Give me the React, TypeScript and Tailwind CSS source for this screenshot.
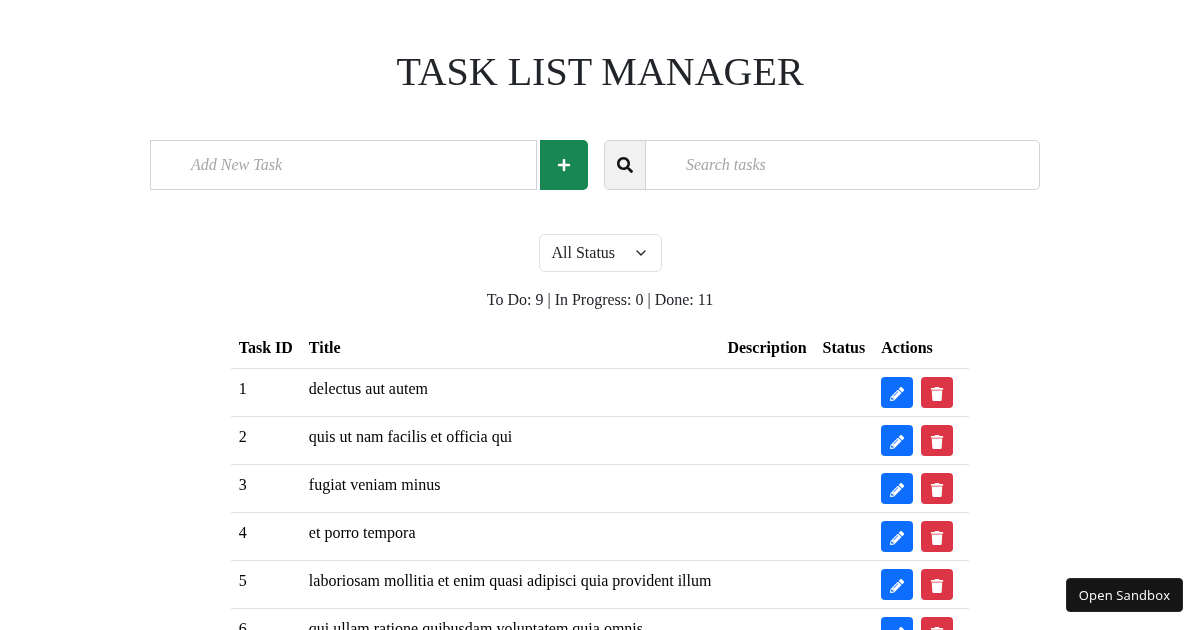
import { FaPlus, FaSearch, FaPencilAlt, FaTrash } from "react-icons/fa";
import { LuChevronDown } from "react-icons/lu";

const rows: [number, string][] = [
  [1, "delectus aut autem"],
  [2, "quis ut nam facilis et officia qui"],
  [3, "fugiat veniam minus"],
  [4, "et porro tempora"],
  [5, "laboriosam mollitia et enim quasi adipisci quia provident illum"],
  [6, "qui ullam ratione quibusdam voluptatem quia omnis"],
];

export default function App() {
  return (
    <div className="relative h-[630px] w-[1200px] overflow-hidden font-['Liberation_Serif',serif] text-[16px] leading-[24px] text-[#212529] will-change-transform">
      <h1 className="pt-[48px] text-center text-[40px] font-normal leading-[48px]">TASK LIST MANAGER</h1>
      <div className="mt-[44px] flex pl-[150px] pr-[160px]">
        <div className="flex h-[50px] w-[387px] items-center border border-[#ced4da] pl-[40px] italic text-[#a6a6a6]">Add New Task</div>
        <button className="ml-[3px] flex h-[50px] w-[48px] items-center justify-center rounded-r-[5px] bg-[#198754] text-white">
          <FaPlus className="h-[14px] w-[14px]" />
        </button>
        <div className="ml-[16px] flex h-[50px] flex-1 rounded-[5px] border border-[#ced4da]">
          <div className="flex w-[41px] items-center justify-center rounded-l-[4px] border-r border-[#ced4da] bg-[#f1f1f1] text-[#111]">
            <FaSearch className="h-[16px] w-[16px]" />
          </div>
          <div className="flex items-center pl-[40px] italic text-[#a6a6a6]">Search tasks</div>
        </div>
      </div>
      <div className="mt-[44px] flex justify-center">
        <div className="flex h-[38px] w-[123px] items-center justify-between rounded-[6px] border border-[#dee2e6] pl-[12px] pr-[12px]">
          <span>All Status</span>
          <LuChevronDown className="h-[16px] w-[16px]" />
        </div>
      </div>
      <p className="mt-[16px] text-center">To Do: 9 | In Progress: 0 | Done: 11</p>
      <div className="mt-[16px] flex justify-center">
        <table className="border-collapse text-black">
          <thead>
            <tr className="border-b border-[#dee2e6]">
              <th className="p-[8px] text-left font-bold">Task ID</th>
              <th className="p-[8px] text-left font-bold">Title</th>
              <th className="p-[8px] text-left font-bold">Description</th>
              <th className="p-[8px] text-left font-bold">Status</th>
              <th className="p-[8px] text-left font-bold">Actions</th>
            </tr>
          </thead>
          <tbody>
            {rows.map(([id, title]) => (
              <tr key={id} className="border-b border-[#dee2e6]">
                <td className="p-[8px] align-top">{id}</td>
                <td className="p-[8px] align-top">{title}</td>
                <td className="p-[8px]"></td>
                <td className="p-[8px]"></td>
                <td className="p-[8px]">
                  <div className="flex gap-[8px] pr-[8px]">
                    <button className="flex h-[31px] w-[32px] items-center justify-center rounded-[4px] bg-[#0d6efd] pt-[3px] text-white">
                      <FaPencilAlt className="h-[14px] w-[14px]" />
                    </button>
                    <button className="flex h-[31px] w-[32px] items-center justify-center rounded-[4px] bg-[#dc3545] pt-[3px] text-white">
                      <FaTrash className="h-[14px] w-[14px]" />
                    </button>
                  </div>
                </td>
              </tr>
            ))}
          </tbody>
        </table>
      </div>
      <div className="absolute left-[1066px] top-[578px] flex h-[34px] w-[117px] items-center justify-center rounded-[4px] border border-[#2a2a2a] bg-[#151515] font-['Open_Sans',sans-serif] text-[13px] font-medium tracking-[0.14px] text-white">
        Open Sandbox
      </div>
    </div>
  );
}
